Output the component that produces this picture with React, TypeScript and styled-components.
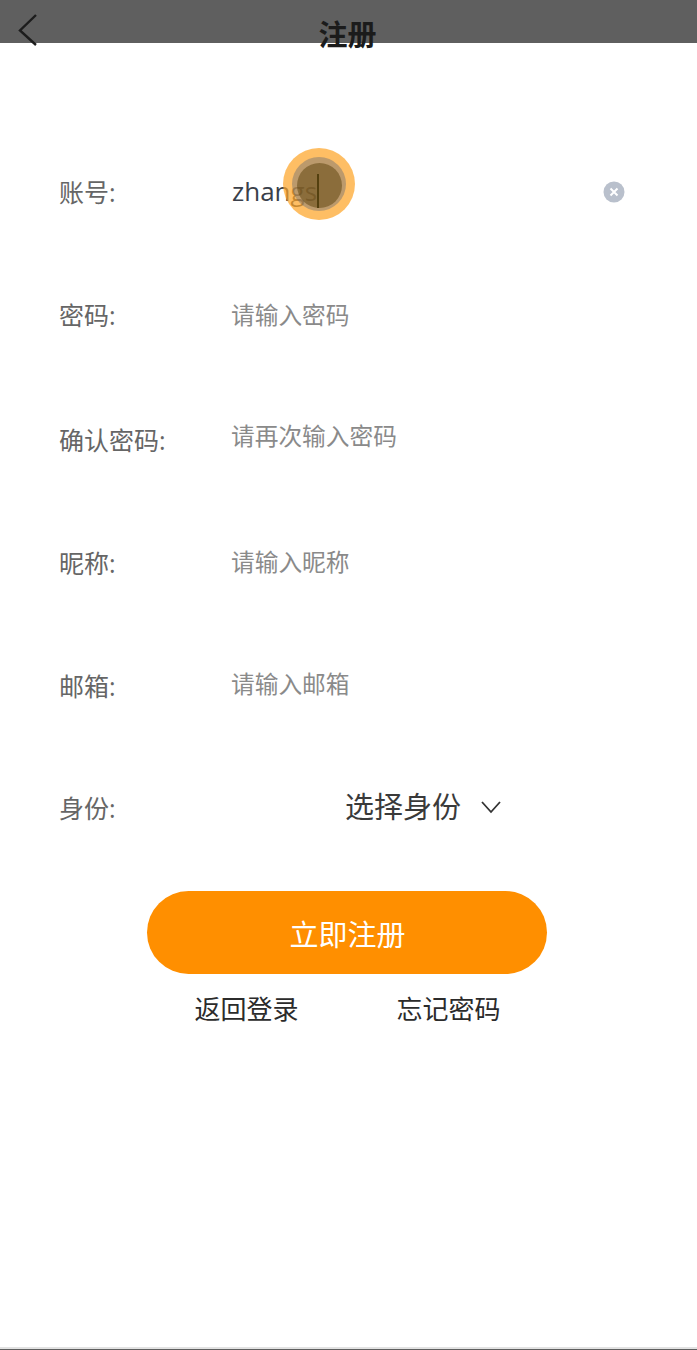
import styled, { createGlobalStyle } from 'styled-components';

const GlobalStyle = createGlobalStyle`
  html, body {
    margin: 0;
    padding: 0;
    background: #fff;
    font-family: "Open Sans", "Noto Sans CJK SC", sans-serif;
  }
`;

const Page = styled.div`
  position: relative;
  width: 697px;
  height: 1350px;
  overflow: hidden;
  display: flex;
  flex-direction: column;
  background: #fff;
`;

const Header = styled.header`
  height: 43px;
  flex-shrink: 0;
  background: #5f5f5f;
  display: flex;
  justify-content: center;
  padding: 15px 2px 0 0;
  box-sizing: border-box;
`;

const BackIcon = styled.svg`
  position: absolute;
  left: 16px;
  top: 13px;
  width: 24px;
  height: 36px;
`;

const Title = styled.h1`
  margin: 0;
  font-size: 29px;
  line-height: 40px;
  font-weight: 700;
  color: #1b1b1b;
`;

const Form = styled.div`
  display: flex;
  flex-direction: column;
  padding: 88px 72px 0 59px;
`;

const Row = styled.div`
  height: 123.4px;
  display: grid;
  grid-template-columns: 173px 1fr auto;
  align-items: center;
`;

const Label = styled.label<{ $lift: number }>`
  font-size: 25px;
  line-height: 34px;
  color: #666;
  transform: translateY(${p => -p.$lift}px);
`;

const Value = styled.div`
  display: flex;
  align-items: center;
  margin-bottom: 4px;
  font-size: 26px;
  line-height: 34px;
  color: #3a3f4a;
`;

const Caret = styled.span`
  position: relative;
  z-index: 1;
  display: inline-block;
  width: 2px;
  height: 34px;
  background: #54400f;
`;

const Placeholder = styled.div<{ $lift: number }>`
  font-size: 23.7px;
  line-height: 34px;
  color: #8a8a8a;
  transform: translate(-1px, ${p => -p.$lift}px);
`;

const ClearIcon = styled.svg`
  width: 22px;
  height: 22px;
  display: block;
  transform: translateY(-1px);
`;

const Select = styled.div`
  display: flex;
  align-items: center;
  gap: 19px;
  margin-left: 113px;
  font-size: 29px;
  line-height: 40px;
  color: #3a3a3a;
  transform: translateY(-3px);
`;

const Chevron = styled.svg`
  width: 22px;
  height: 14px;
`;

const Actions = styled.div`
  display: flex;
  flex-direction: column;
  align-items: center;
  margin-top: 20px;
  padding-right: 4px;
`;

const SubmitButton = styled.button`
  width: 400px;
  height: 83px;
  border: none;
  border-radius: 42px;
  background: #ff8f00;
  color: #fff;
  font-family: inherit;
  font-size: 29px;
  padding: 0 0 0 2px;
`;

const Links = styled.div`
  width: 306px;
  display: flex;
  justify-content: space-between;
  margin: 16px 0 0 2px;
`;

const TextLink = styled.a`
  font-size: 26px;
  line-height: 38px;
  color: #2b2b2b;
`;

const TouchOuter = styled.div`
  position: absolute;
  left: 283px;
  top: 148px;
  width: 72px;
  height: 72px;
  border-radius: 50%;
  background: rgba(253, 165, 40, 0.72);
  display: flex;
  align-items: center;
  justify-content: center;
`;

const TouchInner = styled.div`
  width: 54px;
  height: 54px;
  border-radius: 50%;
  background: rgba(90, 100, 120, 0.4);
  display: flex;
  align-items: center;
  justify-content: center;
`;

const TouchCore = styled.div`
  width: 45px;
  height: 45px;
  margin: 2px 0 0 1px;
  border-radius: 50%;
  background: rgba(80, 55, 0, 0.45);
`;

const BottomEdge = styled.div`
  position: absolute;
  left: 0;
  right: 0;
  bottom: 0;
  height: 3px;
  background: #e2e2e2;
  border-bottom: 1px solid #5f5f5f;
  box-sizing: border-box;
`;

const placeholders = [
  { label: '密码:', text: '请输入密码', lift: 1, labelLift: 1 },
  { label: '确认密码:', text: '请再次输入密码', lift: 3, labelLift: -1 },
  { label: '昵称:', text: '请输入昵称', lift: 1, labelLift: 0 },
  { label: '邮箱:', text: '请输入邮箱', lift: 2, labelLift: 0 },
];

export default function App() {
  return (
    <Page>
      <GlobalStyle />
      <Header>
        <Title>注册</Title>
      </Header>
      <BackIcon viewBox="0 0 24 36" fill="none" stroke="#1c1c1c" strokeWidth="2.4">
        <path d="M20 2 L4 17.5 L20 32" />
      </BackIcon>
      <Form>
        <Row>
          <Label $lift={1}>账号:</Label>
          <Value>
            zhangs
            <Caret />
          </Value>
          <ClearIcon viewBox="0 0 22 22">
            <circle cx="11" cy="11" r="10.5" fill="#b9c0cc" />
            <path d="M7.5 7.5 L14.5 14.5 M14.5 7.5 L7.5 14.5" stroke="#fff" strokeWidth="2" />
          </ClearIcon>
        </Row>
        {placeholders.map(p => (
          <Row key={p.label}>
            <Label $lift={p.labelLift}>{p.label}</Label>
            <Placeholder $lift={p.lift}>{p.text}</Placeholder>
          </Row>
        ))}
        <Row>
          <Label $lift={2}>身份:</Label>
          <Select>
            选择身份
            <Chevron viewBox="0 0 22 14" fill="none" stroke="#333" strokeWidth="1.8">
              <path d="M2 2 L11 12 L20 2" />
            </Chevron>
          </Select>
        </Row>
      </Form>
      <Actions>
        <SubmitButton>立即注册</SubmitButton>
        <Links>
          <TextLink>返回登录</TextLink>
          <TextLink>忘记密码</TextLink>
        </Links>
      </Actions>
      <TouchOuter>
        <TouchInner>
          <TouchCore />
        </TouchInner>
      </TouchOuter>
      <BottomEdge />
    </Page>
  );
}
